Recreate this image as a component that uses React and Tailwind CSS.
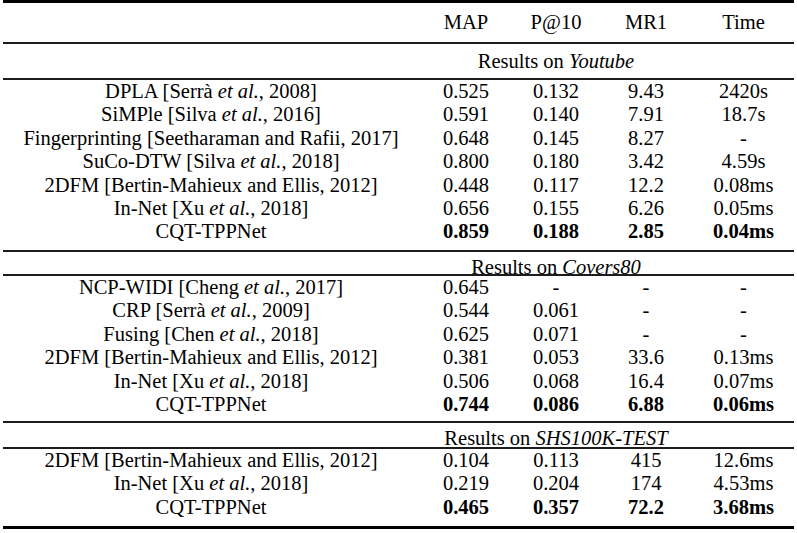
import React from 'react';

const GRID = 'grid grid-cols-[416px_94px_86px_94px_101px]';

const YOUTUBE = [
  { name: ['DPLA [Serrà ', 'et al.', ', 2008]'], v: ['0.525', '0.132', '9.43', '2420s'] },
  { name: ['SiMPle [Silva ', 'et al.', ', 2016]'], v: ['0.591', '0.140', '7.91', '18.7s'] },
  { name: ['Fingerprinting [Seetharaman and Rafii, 2017]'], v: ['0.648', '0.145', '8.27', '-'] },
  { name: ['SuCo-DTW [Silva ', 'et al.', ', 2018]'], v: ['0.800', '0.180', '3.42', '4.59s'] },
  { name: ['2DFM [Bertin-Mahieux and Ellis, 2012]'], v: ['0.448', '0.117', '12.2', '0.08ms'] },
  { name: ['In-Net [Xu ', 'et al.', ', 2018]'], v: ['0.656', '0.155', '6.26', '0.05ms'] },
  { name: ['CQT-TPPNet'], v: ['0.859', '0.188', '2.85', '0.04ms'], bold: true },
];

const COVERS = [
  { name: ['NCP-WIDI [Cheng ', 'et al.', ', 2017]'], v: ['0.645', '-', '-', '-'] },
  { name: ['CRP [Serrà ', 'et al.', ', 2009]'], v: ['0.544', '0.061', '-', '-'] },
  { name: ['Fusing [Chen ', 'et al.', ', 2018]'], v: ['0.625', '0.071', '-', '-'] },
  { name: ['2DFM [Bertin-Mahieux and Ellis, 2012]'], v: ['0.381', '0.053', '33.6', '0.13ms'] },
  { name: ['In-Net [Xu ', 'et al.', ', 2018]'], v: ['0.506', '0.068', '16.4', '0.07ms'] },
  { name: ['CQT-TPPNet'], v: ['0.744', '0.086', '6.88', '0.06ms'], bold: true },
];

const SHS = [
  { name: ['2DFM [Bertin-Mahieux and Ellis, 2012]'], v: ['0.104', '0.113', '415', '12.6ms'] },
  { name: ['In-Net [Xu ', 'et al.', ', 2018]'], v: ['0.219', '0.204', '174', '4.53ms'] },
  { name: ['CQT-TPPNet'], v: ['0.465', '0.357', '72.2', '3.68ms'], bold: true },
];

function Rule({ thick }) {
  return <div className={thick ? 'h-[3px] bg-black' : 'h-[2px] bg-[#1c1c1c]'} />;
}

function Name({ parts }) {
  return (
    <span>
      {parts.map((p, i) => (i === 1 ? <i key={i}>{p}</i> : <span key={i}>{p}</span>))}
    </span>
  );
}

function Row({ r }) {
  return (
    <div className={`${GRID} h-[23.4px] leading-[23.4px] text-center`}>
      <div className="whitespace-nowrap"><Name parts={r.name} /></div>
      {r.v.map((x, i) => (
        <div key={i} className={r.bold ? 'font-bold' : ''}>{x}</div>
      ))}
    </div>
  );
}

function Label({ h, children }) {
  return (
    <div className={`${GRID} ${h} items-center text-center`}>
      <div />
      <div className="col-span-3 whitespace-nowrap">Results on <i>{children}</i></div>
      <div />
    </div>
  );
}

export default function App() {
  return (
    <div className="w-[797px] h-[533px] bg-white overflow-hidden">
      <div className="ml-[3px] w-[791px] font-['Liberation_Serif','Times_New_Roman',serif] text-[20.5px] text-black">
        <Rule thick />
        <div className={`${GRID} h-[39px] items-center text-center`}>
          <div />
          <div>MAP</div>
          <div>P@10</div>
          <div>MR1</div>
          <div>Time</div>
        </div>
        <Rule />
        <Label h="h-[34px]">Youtube</Label>
        <Rule />
        <div className="h-[170px]">
          {YOUTUBE.map((r, i) => <Row key={i} r={r} />)}
        </div>
        <Rule />
        <Label h="h-[22px]">Covers80</Label>
        <Rule />
        <div className="h-[145px]">
          {COVERS.map((r, i) => <Row key={i} r={r} />)}
        </div>
        <Rule />
        <Label h="h-[24px]">SHS100K-TEST</Label>
        <Rule />
        <div className="h-[77px]">
          {SHS.map((r, i) => <Row key={i} r={r} />)}
        </div>
        <Rule thick />
      </div>
    </div>
  );
}
